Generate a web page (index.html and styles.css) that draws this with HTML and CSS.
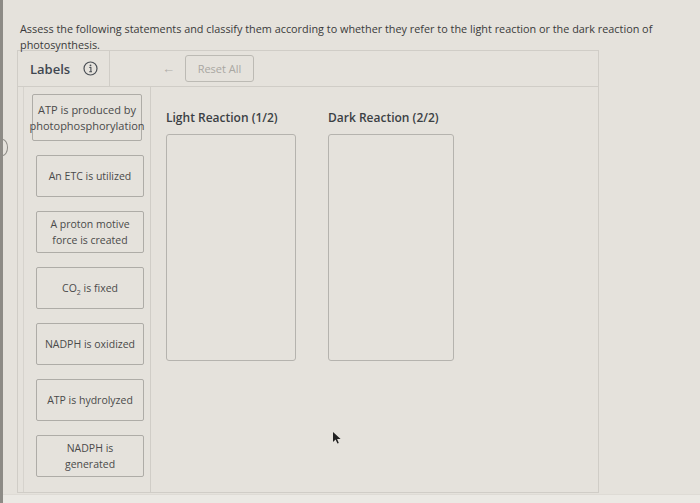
FILE: index.html
```html
<!DOCTYPE html>
<html lang="en">
<head>
    <meta charset="UTF-8">
    <meta name="viewport" content="width=device-width, initial-scale=1.0">
    <title>Light and Dark Reactions</title>
    <link rel="stylesheet" href="styles.css">
</head>
<body>
    <div class="screen-edge"></div>
    <div class="page">
        <p class="prompt">Assess the following statements and classify them according to whether they refer to the light reaction or the dark reaction of photosynthesis.</p>

        <div class="activity">
            <div class="toolbar">
                <div class="toolbar-labels">
                    <span class="labels-title">Labels</span>
                    <svg class="info-icon" width="15" height="15" viewBox="0 0 15 15">
                        <circle cx="7.5" cy="7.5" r="6.5" fill="none" stroke="#4a4f55" stroke-width="1.2"/>
                        <circle cx="7.5" cy="4.4" r="0.9" fill="#4a4f55"/>
                        <path d="M6.3 6.5h1.6v4.3M6.2 10.8h2.8" fill="none" stroke="#4a4f55" stroke-width="1.1"/>
                    </svg>
                </div>
                <div class="toolbar-actions">
                    <span class="undo">&larr;</span>
                    <button class="reset-btn" type="button">Reset All</button>
                </div>
            </div>

            <div class="board">
                <div class="label-bank">
                    <div class="label-item tall"><span>ATP is produced by photophosphorylation</span></div>
                    <div class="label-item"><span>An ETC is utilized</span></div>
                    <div class="label-item"><span>A proton motive<br>force is created</span></div>
                    <div class="label-item"><span>CO<sub>2</sub> is fixed</span></div>
                    <div class="label-item"><span>NADPH is oxidized</span></div>
                    <div class="label-item"><span>ATP is hydrolyzed</span></div>
                    <div class="label-item"><span>NADPH is<br>generated</span></div>
                </div>

                <div class="targets">
                    <div class="target">
                        <h3>Light Reaction (1/2)</h3>
                        <div class="drop-zone"></div>
                    </div>
                    <div class="target">
                        <h3>Dark Reaction (2/2)</h3>
                        <div class="drop-zone narrow"></div>
                    </div>
                </div>
            </div>
        </div>
    </div>
    <div class="screen-bottom"></div>

    <svg class="cursor" width="10" height="14" viewBox="0 0 10 14">
        <path d="M1 1 L1 11 L3.6 8.6 L5.4 12.6 L6.8 12 L5.1 8.1 L8.6 8.1 Z" fill="#222"/>
    </svg>
</body>
</html>
```

FILE: styles.css
```css
* {
    box-sizing: border-box;
    margin: 0;
    padding: 0;
}

body {
    font-family: 'Open Sans', 'Liberation Sans', sans-serif;
    background: #e5e2dc;
    color: #3b3b3b;
    width: 700px;
    height: 503px;
    overflow: hidden;
    position: relative;
    border-left: 3px solid #8d8b86;
}

/* bezel bump on the left edge of the photographed screen */
.screen-edge {
    position: absolute;
    left: -6px;
    top: 139px;
    width: 11px;
    height: 17px;
    border: 1px solid #8d8b86;
    border-radius: 50%;
}

/* lighter strip along the bottom of the photo */
.screen-bottom {
    position: absolute;
    left: 0;
    right: 0;
    bottom: 0;
    height: 9px;
    background: #ebe9e4;
    border-top: 1px solid #dedbd5;
}

.page {
    padding: 21px 0 0 17px;
}

.prompt {
    font-size: 10.85px;
    line-height: 16px;
    width: 660px;
    color: #3a3a3a;
}

.activity {
    margin-top: -3px;
    margin-left: -3px;
    width: 582px;
    height: 443px;
    border: 1px solid #d0cdc7;
    display: flex;
    flex-direction: column;
}

.toolbar {
    height: 36px;
    display: flex;
    border-bottom: 1px solid #d0cdc7;
}

.toolbar-labels {
    width: 92px;
    border-right: 1px solid #d0cdc7;
    display: flex;
    align-items: center;
    gap: 13px;
    padding-left: 12px;
}

.labels-title {
    font-size: 13px;
    font-weight: 600;
    color: #3f4750;
}

.info-icon {
    display: block;
}

.toolbar-actions {
    display: flex;
    align-items: center;
    padding-left: 52px;
    gap: 10px;
}

.undo {
    color: #b0aea9;
    font-size: 13px;
    line-height: 1;
}

.reset-btn {
    font-family: inherit;
    font-size: 11px;
    color: #a9a7a2;
    background: transparent;
    border: 1px solid #bcbab4;
    border-radius: 3px;
    width: 69px;
    height: 27px;
}

.board {
    flex: 1;
    display: flex;
}

.label-bank {
    width: 128px;
    margin-left: 5px;
    border-left: 1px solid #d6d3cd;
    border-right: 1px solid #d0cdc7;
    padding: 7px 0 0 12px;
    display: flex;
    flex-direction: column;
    gap: 14px;
}

.label-item {
    width: 108px;
    height: 42px;
    border: 1px solid #aeaca7;
    border-radius: 2px;
    display: flex;
    align-items: center;
    justify-content: center;
    text-align: center;
    font-size: 10.5px;
    line-height: 16px;
    color: #4a4a4a;
    white-space: nowrap;
}

.label-item.tall {
    height: 47px;
    margin-left: -4px;
    width: 110px;
    font-size: 11px;
    white-space: normal;
}

.label-item sub {
    font-size: 7px;
    line-height: 0;
}

.targets {
    display: flex;
    gap: 32px;
    padding: 22px 0 0 15px;
}

.target h3 {
    font-size: 12px;
    font-weight: 600;
    color: #3b3f44;
    line-height: 18px;
    margin-bottom: 7px;
}

.drop-zone {
    width: 130px;
    height: 227px;
    border: 1px solid #b5b3ae;
    border-radius: 3px;
}

.drop-zone.narrow {
    width: 126px;
}

.cursor {
    position: absolute;
    left: 329px;
    top: 431px;
}
```
